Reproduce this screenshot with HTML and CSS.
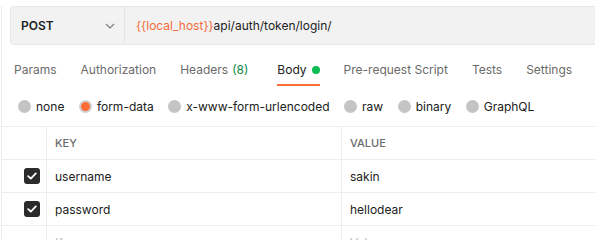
FILE: index.html
```html
<!DOCTYPE html>
<html>
<head>
<meta charset="utf-8">
<link rel="stylesheet" href="styles.css">
</head>
<body>
<div class="page">
  <div class="request">
    <div class="method">
      <span class="method-name">POST</span>
      <svg class="chevron" width="10" height="6" viewBox="0 0 10 6"><path d="M1 1l4 4 4-4" fill="none" stroke="#7a7a7a" stroke-width="1.1"/></svg>
    </div>
    <div class="url"><span class="var">{{local_host}}</span>api/auth/token/login/</div>
  </div>

  <div class="tabs">
    <span class="tab">Params</span>
    <span class="tab">Authorization</span>
    <span class="tab">Headers <span class="count">(8)</span></span>
    <span class="tab active">Body <span class="dot"></span></span>
    <span class="tab">Pre-request Script</span>
    <span class="tab">Tests</span>
    <span class="tab">Settings</span>
  </div>

  <div class="radios">
    <span class="radio"><span class="circle"></span>none</span>
    <span class="radio"><span class="circle on"></span>form-data</span>
    <span class="radio"><span class="circle"></span>x-www-form-urlencoded</span>
    <span class="radio"><span class="circle"></span>raw</span>
    <span class="radio"><span class="circle"></span>binary</span>
    <span class="radio"><span class="circle"></span>GraphQL</span>
  </div>

  <div class="table">
    <div class="cell check"></div>
    <div class="cell head">KEY</div>
    <div class="cell head last">VALUE</div>

    <div class="cell check"><span class="box"><svg width="10" height="8" viewBox="0 0 10 8"><path d="M1.2 4.2l2.6 2.4L8.8 1.4" fill="none" stroke="#fff" stroke-width="1.8" stroke-linecap="round" stroke-linejoin="round"/></svg></span></div>
    <div class="cell">username</div>
    <div class="cell last">sakin</div>

    <div class="cell check"><span class="box"><svg width="10" height="8" viewBox="0 0 10 8"><path d="M1.2 4.2l2.6 2.4L8.8 1.4" fill="none" stroke="#fff" stroke-width="1.8" stroke-linecap="round" stroke-linejoin="round"/></svg></span></div>
    <div class="cell">password</div>
    <div class="cell last">hellodear</div>

    <div class="cell check"></div>
    <div class="cell placeholder">Key</div>
    <div class="cell placeholder last">Value</div>
  </div>
</div>
</body>
</html>
```

FILE: styles.css
```css
html, body {
  margin: 0;
  padding: 0;
  background: #fff;
  overflow: hidden;
}
body {
  font-family: Inter, "Noto Sans", "Liberation Sans", sans-serif;
  font-size: 12px;
  color: #212121;
}
.page {
  margin-left: 1px;
  border-left: 1px solid #ededed;
  height: 240px;
  width: 640px;
}
.request {
  display: flex;
  margin: 6px 0 0 8px;
  height: 37px;
  border: 1px solid #e6e6e6;
  border-radius: 4px;
  background: #f2f2f2;
}
.method {
  display: flex;
  align-items: center;
  justify-content: space-between;
  width: 114px;
  padding: 0 9px 0 10px;
  box-sizing: border-box;
  border-right: 1px solid #e3e3e3;
}
.method-name {
  font-weight: 600;
  font-size: 12px;
  color: #212121;
}
.url {
  display: flex;
  align-items: center;
  padding-left: 11px;
  font-size: 12px;
  color: #212121;
}
.var { color: #f26b3a; }

.tabs {
  display: flex;
  margin-top: 10px;
  padding-left: 12px;
  gap: 24px;
}
.tab {
  padding-top: 7px;
  padding-bottom: 6px;
  line-height: 16px;
  color: #6b6b6b;
  border-bottom: 2px solid transparent;
  display: flex;
  align-items: center;
  white-space: nowrap;
}
.tab .count { color: #0f8a43; margin-left: 4px; }
.tab.active {
  color: #212121;
  border-bottom-color: #ff6c37;
  margin-left: 5px;
}
.dot {
  display: inline-block;
  width: 8px;
  height: 8px;
  border-radius: 50%;
  background: #0cbb52;
  margin-left: 5px;
}
.radios {
  display: flex;
  align-items: center;
  height: 40px;
  padding-left: 16px;
  gap: 14.5px;
}
.radio {
  display: flex;
  align-items: center;
  color: #212121;
}
.circle {
  width: 13px;
  height: 13px;
  border-radius: 50%;
  background: #c4c4c4;
  margin-right: 5px;
  box-sizing: border-box;
}
.circle.on {
  background: #ff6c37;
  border: 2.5px solid #cfcfcf;
}
.table {
  display: grid;
  grid-template-columns: 45px 295px 1fr;
  border-top: 1px solid #ededed;
}
.cell {
  height: 32px;
  border-bottom: 1px solid #ededed;
  border-right: 1px solid #ededed;
  display: flex;
  align-items: center;
  padding-left: 8px;
  color: #212121;
}
.cell.last { border-right: none; }
.cell.check {
  padding-left: 22px;
}
.head {
  font-size: 11px;
  font-weight: 500;
  color: #6b6b6b;
}
.placeholder { color: #b8b8b8; }
.box {
  width: 16px;
  height: 16px;
  border-radius: 3px;
  background: #2b2b2b;
  display: flex;
  align-items: center;
  justify-content: center;
}
```
